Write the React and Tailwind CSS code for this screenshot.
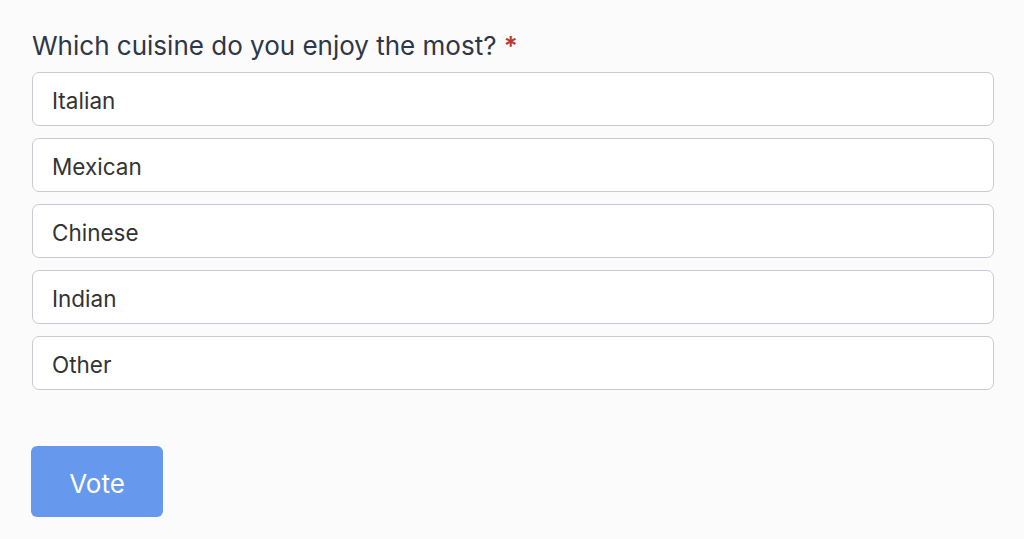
const options = ['Italian', 'Mexican', 'Chinese', 'Indian', 'Other'];

export default function App() {
  return (
    <div className="min-h-[539px] w-[1024px] bg-[#fbfbfb] px-[32px] pt-[30px] font-['Inter',sans-serif]">
      <label className="block text-[26px] leading-[32px] text-[#2d3748]">
        Which cuisine do you enjoy the most? <span className="font-semibold text-[#b83a2e]">*</span>
      </label>
      <div className="mt-[10px] flex w-[962px] flex-col gap-[12px]">
        {options.map((o) => (
          <div
            key={o}
            className="flex h-[54px] items-center rounded-[7px] border-[1.5px] border-[#c7cad0] bg-white pt-[3px] pl-[19px] text-[22.5px] text-[#333333]"
          >
            {o}
          </div>
        ))}
      </div>
      <button className="mt-[56px] ml-[-1px] h-[71px] w-[132px] rounded-[6px] bg-[#6699ee] pt-[3px] text-[26px] text-white">
        Vote
      </button>
    </div>
  );
}
